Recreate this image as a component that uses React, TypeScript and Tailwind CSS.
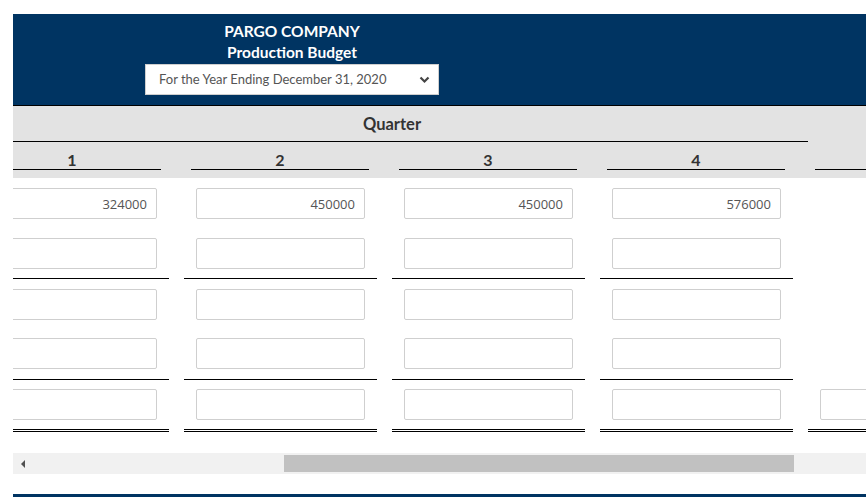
type Line = "none" | "single" | "double";

const rows: { values: string[]; line: Line; pad: string; total?: boolean }[] = [
  { values: ["324000", "450000", "450000", "576000"], line: "none", pad: "pt-[10px] pb-[9px]" },
  { values: ["", "", "", ""], line: "single", pad: "pt-[10px] pb-[9px]" },
  { values: ["", "", "", ""], line: "none", pad: "pt-[10px] pb-[8px]" },
  { values: ["", "", "", ""], line: "single", pad: "pt-[10px] pb-[10px]" },
  { values: ["", "", "", ""], line: "double", pad: "pt-[9px] pb-[9px]", total: true },
];

function Cell({ value, line, pad }: { value: string; line: Line; pad: string }) {
  const border =
    line === "single" ? "border-b border-black" : line === "double" ? "border-b-[3px] border-double border-black" : "";
  return (
    <div className="w-[208px] shrink-0 pr-[15px]">
      <div className={`pl-[12px] ${pad} ${border}`}>
        <input
          readOnly
          value={value}
          className="h-[31px] w-[169px] rounded-[2px] border border-[#cfcfcf] bg-white px-[9px] text-right text-[13px] text-[#555] outline-none"
          style={{ fontFamily: '"Open Sans", "DejaVu Sans", sans-serif' }}
        />
      </div>
    </div>
  );
}

export default function App() {
  return (
    <main className="min-h-screen w-full overflow-hidden bg-white pl-[13px] pt-[14px]" style={{ fontFamily: 'Lato, "Open Sans", sans-serif' }}>
      <div className="h-[92px] border-b border-black bg-[#003462]">
        <div className="ml-[132px] flex w-[294px] flex-col items-center pt-[7px]">
          <div className="text-[15.5px] font-bold leading-[21px] text-white">PARGO COMPANY</div>
          <div className="text-[15.5px] font-bold leading-[21px] text-white">Production Budget</div>
          <div className="mt-[1px] flex h-[31px] w-[294px] items-center justify-between border border-[#cfcfcf] bg-white pl-[13px] pr-[7px] pt-[1px]">
            <span className="text-[13px] text-[#555]">For the Year Ending December 31, 2020</span>
            <svg width="11" height="8" viewBox="0 0 11 8" className="mr-[1px]">
              <polyline points="1.5,1.5 5.5,5.5 9.5,1.5" fill="none" stroke="#444" strokeWidth="2.2" />
            </svg>
          </div>
        </div>
      </div>

      <div className="overflow-hidden">
        <div className="-ml-[37px] w-[1100px]">
          <div className="bg-[#e3e3e3] pb-[8px]">
            <div className="flex h-[36px] w-[832px] items-center justify-center border-b border-black pt-[1px] text-[16.5px] font-bold text-[#333]">
              Quarter
            </div>
            <div className="flex">
              {["1", "2", "3", "4", ""].map((q, i) => (
                <div key={i} className="w-[208px] shrink-0 pl-[7px]">
                  <div className="flex h-[28px] w-[178px] items-center justify-center border-b border-black pt-[8px] text-[16px] font-bold text-[#333]">
                    {q}
                  </div>
                </div>
              ))}
            </div>
          </div>

          {rows.map((row, r) => (
            <div key={r} className="flex">
              {row.values.map((v, c) => (
                <Cell key={c} value={v} line={row.line} pad={row.pad} />
              ))}
              {row.total ? <Cell value="" line="double" pad={row.pad} /> : <div className="w-[208px] shrink-0" />}
            </div>
          ))}
        </div>

        <div className="mt-[21px] flex h-[21px] items-center bg-[#f1f1f1]">
          <div className="flex w-[271px] items-center pl-[8px]">
            <div className="h-0 w-0 border-y-[4px] border-r-[4px] border-y-transparent border-r-[#505050]" />
          </div>
          <div className="h-[17px] w-[510px] bg-[#c1c1c1]" />
        </div>
      </div>

      <div className="mt-[20px] h-[3px] bg-[#003462]" />
    </main>
  );
}
